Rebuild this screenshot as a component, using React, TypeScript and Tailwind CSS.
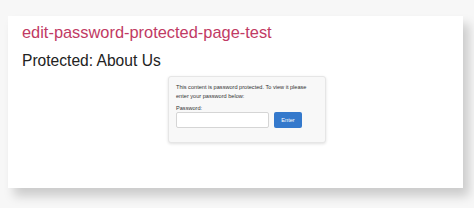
export default function App() {
  return (
    <div className="h-[208px] w-[474px] overflow-hidden bg-[#f7f7f7] pt-[16px] pl-[8px] font-['Liberation_Sans',Arial,sans-serif]">
      <div className="h-[172px] w-[455px] bg-white pt-[6px] pl-[14px] shadow-[6px_8px_10px_rgba(0,0,0,0.18)]">
        <h1 className="text-[16.4px] leading-[20px] text-[#c13a64]">edit-password-protected-page-test</h1>
        <h2 className="mt-[9px] text-[15.6px] leading-[20px] text-[#222]">Protected: About Us</h2>
        <div className="ml-[146px] mt-[5px] w-[158px] rounded-[3px] border border-[#e6e6e6] bg-[#f8f8f8] px-[7px] pt-[6px] pb-[14px] shadow-[0_1px_3px_rgba(0,0,0,0.12)]">
          <p className="text-[5.6px] leading-[9px] text-[#333]">
            This content is password protected. To view it please enter your password below:
          </p>
          <label className="mt-[3px] block text-[5.6px] leading-[8px] text-[#333]">Password:</label>
          <div className="flex items-center gap-[5px]">
            <input type="password" className="h-[16px] w-[93px] rounded-[2px] border border-[#d5d5d5] bg-white" />
            <button className="h-[16px] w-[28px] rounded-[2px] bg-[#3479cc] text-[5.6px] text-white">Enter</button>
          </div>
        </div>
      </div>
    </div>
  );
}
